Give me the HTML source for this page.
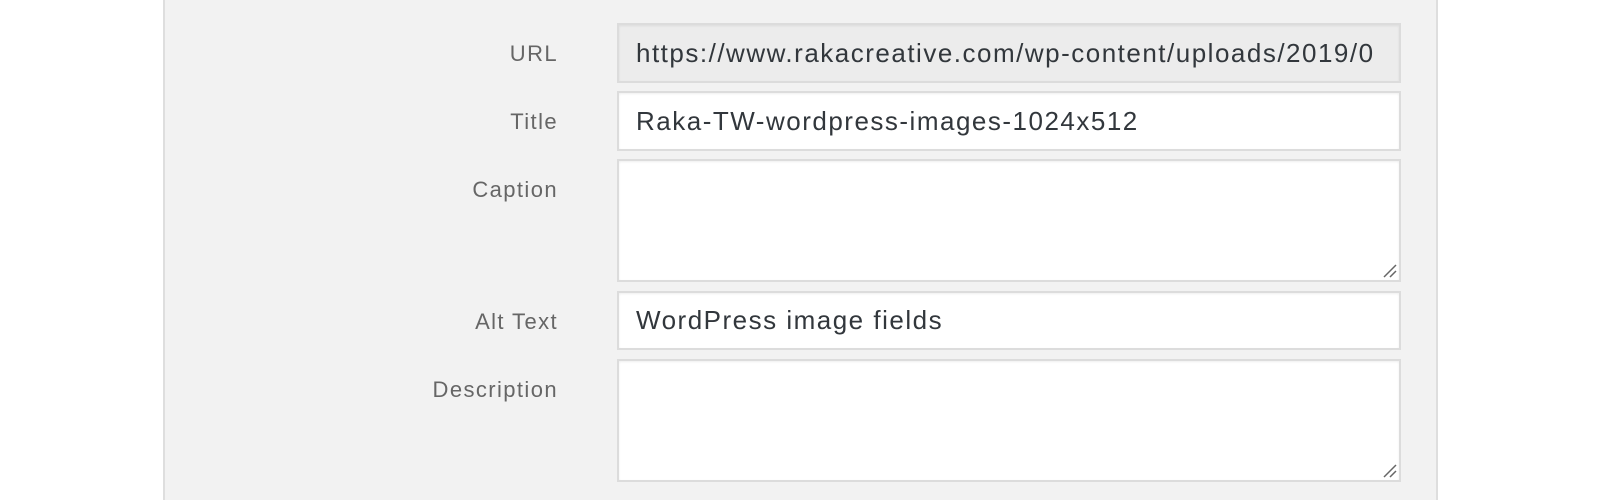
<!DOCTYPE html>
<html><head><style>
html,body{margin:0;padding:0;background:#fff;width:1600px;height:500px;overflow:hidden;font-family:"Liberation Sans",Helvetica,Arial,sans-serif}
.panel{position:absolute;left:163px;top:0;width:1271px;height:500px;background:#f2f2f2;border-left:2px solid #dedede;border-right:2px solid #dedede}
.lab{position:absolute;right:1042px;font-size:22px;letter-spacing:1.4px;color:#666;text-align:right;white-space:nowrap}
.in{position:absolute;left:617px;width:784px;background:#fff;border:2px solid #dcdcdc;box-shadow:inset 0 1px 2px rgba(0,0,0,.07);box-sizing:border-box;font-size:26px;letter-spacing:1.5px;color:#32373c;padding-left:17px;overflow:hidden;white-space:nowrap}
.ro{background:#ececec}
.grip{position:absolute;right:2px;bottom:2px}
</style></head><body>
<div class="panel"></div>
<div class="lab" style="top:41px">URL</div>
<div class="lab" style="top:109px">Title</div>
<div class="lab" style="top:177px">Caption</div>
<div class="lab" style="top:309px">Alt Text</div>
<div class="lab" style="top:377px">Description</div>
<div class="in ro" style="top:23px;height:60px;line-height:56px">https://www.rakacreative.com/wp-content/uploads/2019/0</div>
<div class="in" style="top:91px;height:60px;line-height:56px">Raka-TW-wordpress-images-1024x512</div>
<div class="in" style="top:159px;height:123px"><svg class="grip" width="14" height="14"><path d="M1 13L13 1M7 13L13 7" stroke="#666" stroke-width="1.5"/></svg></div>
<div class="in" style="top:291px;height:59px;line-height:55px">WordPress image fields</div>
<div class="in" style="top:359px;height:123px"><svg class="grip" width="14" height="14"><path d="M1 13L13 1M7 13L13 7" stroke="#666" stroke-width="1.5"/></svg></div>
</body></html>
